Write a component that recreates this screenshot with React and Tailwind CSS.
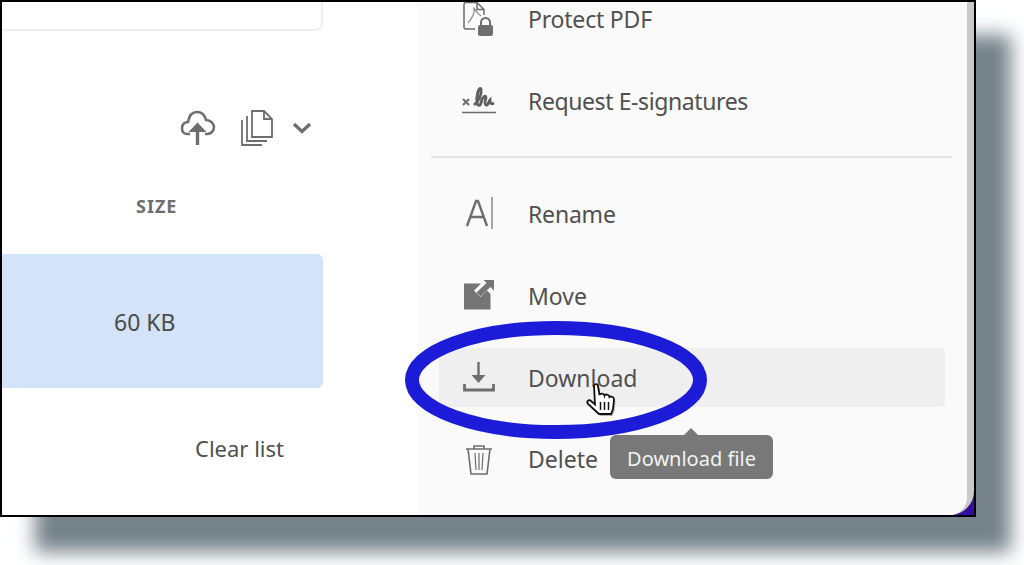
const font = { fontFamily: '"Noto Sans", "Open Sans", sans-serif' };

const ProtectIcon = () => (
  <svg width="34" height="36" viewBox="0 0 34 36" fill="none">
    <path d="M4 1.500H15L22 8.500V14M15 1.500V8.500H22M4 1.500Q2 1.500 2 3.500V26Q2 28 4 28H13" stroke="#6e6e6e" strokeWidth="1.500" />
    <path d="M6 22C10 18 13 11 12 7.500C11 5 14 12 19 15" stroke="#8a8a8a" strokeWidth="1.200" />
    <rect x="16" y="24" width="15" height="11" rx="2" fill="#6e6e6e" />
    <path d="M19 24V21.500A4.500 4.500 0 0 1 28 21.500V24" stroke="#6e6e6e" strokeWidth="2" />
  </svg>
);

const SignIcon = () => (
  <svg width="36" height="30" viewBox="0 0 36 30" fill="none">
    <path d="M2 13L8 19M8 13L2 19" stroke="#6e6e6e" strokeWidth="2" />
    <path d="M13 19C18 15 21 8 20 3C18 0 15 10 16 17C17 20 19 20 20 17C21 11 25 8 25 12C24 15 23 18 25 19C27 20 28 15 29 14C29 17 30 19 33 17" stroke="#5f5f5f" strokeWidth="2.800" />
    <path d="M1 26.500H35" stroke="#6e6e6e" strokeWidth="1.500" />
  </svg>
);

const RenameIcon = () => (
  <svg width="28" height="34" viewBox="0 0 28 34" fill="none">
    <path d="M1 30L10 5H12L21 30M4.500 21H17.500" stroke="#6e6e6e" strokeWidth="2.400" />
    <path d="M26 1V33" stroke="#6e6e6e" strokeWidth="1.200" />
  </svg>
);

const MoveIcon = () => (
  <svg width="30" height="30" viewBox="0 0 30 30">
    <path d="M0 3.500H17L10 10.500L16.500 17L23 10.500L26.500 14V29.500H0Z" fill="#757575" />
    <path d="M19.500 0H30V10.500L26.500 7L16.500 16.500L12.500 12.500L22.500 3Z" fill="#757575" />
  </svg>
);

const DownloadIcon = () => (
  <svg width="32" height="30" viewBox="0 0 32 30" fill="none">
    <path d="M15.500 0V17" stroke="#6e6e6e" strokeWidth="2.400" />
    <path d="M8.500 13H22.500L15.500 21Z" fill="#6e6e6e" />
    <path d="M1.500 22V28H30.500V22" stroke="#6e6e6e" strokeWidth="2.800" />
  </svg>
);

const TrashIcon = () => (
  <svg width="28" height="31" viewBox="0 0 28 31" fill="none" stroke="#6e6e6e" strokeWidth="1.600">
    <path d="M1 5H27M9 5V2H19V5" />
    <path d="M3 5L6 30H22L25 5" />
    <path d="M10 9L11 26M14 9V26M18 9L17 26" strokeWidth="1.200" />
  </svg>
);

const CloudIcon = () => (
  <svg width="36" height="36" viewBox="0 0 36 36" fill="none">
    <path d="M10 24H7C3 24 2 21 2 18C2 14 5 12 8 12C9 6 12 2 17 2C22 2 25 6 26 10C31 10 34 14 34 17C34 21 31 24 27 24H25" stroke="#6e6e6e" strokeWidth="2.600" />
    <path d="M17.500 35V18" stroke="#6e6e6e" strokeWidth="3.400" />
    <path d="M8.500 22L17.500 12.500L26.500 22Z" fill="#6e6e6e" />
  </svg>
);

const CopyIcon = () => (
  <svg width="34" height="36" viewBox="0 0 34 36" fill="none" stroke="#6e6e6e" strokeWidth="1.800">
    <path d="M12 1H24L32 9V27H12Z" />
    <path d="M24 1V9H32" />
    <path d="M7 6V31H27" />
    <path d="M2 10V35H22" />
  </svg>
);

const Chevron = () => (
  <svg width="20" height="12" viewBox="0 0 20 12" fill="none">
    <path d="M2 2L10 9.500L18 2" stroke="#6e6e6e" strokeWidth="3.400" />
  </svg>
);

const HandCursor = () => (
  <svg className="absolute left-[585px] top-[383px]" width="33" height="34" viewBox="0 0 33 34" fill="none">
    <path d="M9 3C9 0.500 13 0.500 13 3L14.500 12C15 10 19 10 19.500 12.500C20 11 24 11 24.500 14C25.500 13 29 13.500 29 16.500L28 26L26 31H14L3 21C1 18 4 16 6 18L10 21.500Z" fill="#b5b5b5" transform="translate(1.500 2)" />
    <path d="M9 3C9 0.500 13 0.500 13 3L14.500 12C15 10 19 10 19.500 12.500C20 11 24 11 24.500 14C25.500 13 29 13.500 29 16.500L28 26L26 31H14L3 21C1 18 4 16 6 18L10 21.500Z" fill="#ffffff" stroke="#111111" strokeWidth="1.800" />
    <path d="M15.500 19V27M19.500 19V27M23.500 19V27" stroke="#111111" strokeWidth="1.500" />
  </svg>
);

const Row = ({ icon, label, active, textClass = '' }) => (
  <div className={`flex items-center h-[59px] rounded-[5px] ${active ? 'bg-[#efefef]' : ''}`}>
    <div className="w-[80px] mr-[9px] flex justify-center">{icon}</div>
    <span className={`text-[23px] text-[#505050] ${textClass}`}>{label}</span>
  </div>
);

export default function App() {
  return (
    <div className="w-[1024px] h-[565px] bg-white overflow-hidden relative" style={font}>
      <div className="w-[976px] h-[517px] border-2 border-black bg-[#34109a] shadow-[35px_35px_18px_#76838b] overflow-hidden">
        <div className="h-full bg-[#cacaca] pr-[7px] rounded-br-[24px]">
          <div className="h-full flex bg-white rounded-br-[18px] overflow-hidden">
            {/* Left: file list */}
            <div className="w-[415px] shrink-0 flex flex-col">
              <div className="w-[321px] h-[29px] border-b-2 border-r-2 border-[#eeeeee] rounded-br-[8px]" />
              <div className="w-[321px] mt-[79px] flex items-center justify-end">
                <CloudIcon />
                <div className="ml-[24px]"><CopyIcon /></div>
                <div className="ml-[18px] mr-[11px]"><Chevron /></div>
              </div>
              <div className="w-[321px] mt-[48px] h-[24px] flex items-center pl-[134px] text-[18px] font-bold tracking-[1px] text-[#6e6e6e]">SIZE</div>
              <div className="w-[321px] mt-[36px] h-[134px] pt-[2px] bg-[#d3e3f9] rounded-r-[6px] flex items-center pl-[112px] text-[23px] text-[#4b4b4b]">60 KB</div>
              <div className="w-[321px] mt-[43px] pr-[39px] text-right text-[22px] leading-[34px] text-[#505050]">Clear list</div>
            </div>

            {/* Right: action menu */}
            <div className="flex-1 bg-[#fafafa] pl-[22px] pr-[22px]">
              <div className="flex flex-col gap-[23px] -mt-[12.500px]">
                <Row icon={<ProtectIcon />} label="Protect PDF" textClass="tracking-[-0.2px]" />
                <Row icon={<SignIcon />} label="Request E-signatures" textClass="tracking-[-0.4px]" />
              </div>
              <div className="h-[2px] bg-[#e3e3e3] -ml-[8px] -mr-[7px] mt-[25px] mb-[26px]" />
              <div className="flex flex-col gap-[23px]">
                <Row icon={<div className="ml-[2px]"><RenameIcon /></div>} label="Rename" textClass="tracking-[-0.2px] pt-[2px]" />
                <Row icon={<MoveIcon />} label="Move" textClass="pt-[2px]" />
                <Row icon={<DownloadIcon />} label="Download" textClass="pt-[2px]" active />
                <Row icon={<TrashIcon />} label="Delete" />
              </div>
            </div>
          </div>
        </div>
      </div>

      {/* Annotation ellipse */}
      <svg className="absolute left-[400px] top-[316px]" width="312" height="128" viewBox="0 0 312 128" fill="none">
        <ellipse cx="156" cy="64" rx="144" ry="52" stroke="#1c1cd8" strokeWidth="14" />
      </svg>

      <HandCursor />

      {/* Tooltip */}
      <div className="absolute left-[610px] top-[435px] w-[163px] h-[44px] pt-[3px] bg-[#787878] rounded-[6px] flex items-center justify-center text-[20px] text-[#f2f2f2]">
        <div className="absolute -top-[7px] left-[73px] w-0 h-0 border-l-[8px] border-r-[8px] border-b-[8px] border-l-transparent border-r-transparent border-b-[#787878]" />
        Download file
      </div>
    </div>
  );
}
